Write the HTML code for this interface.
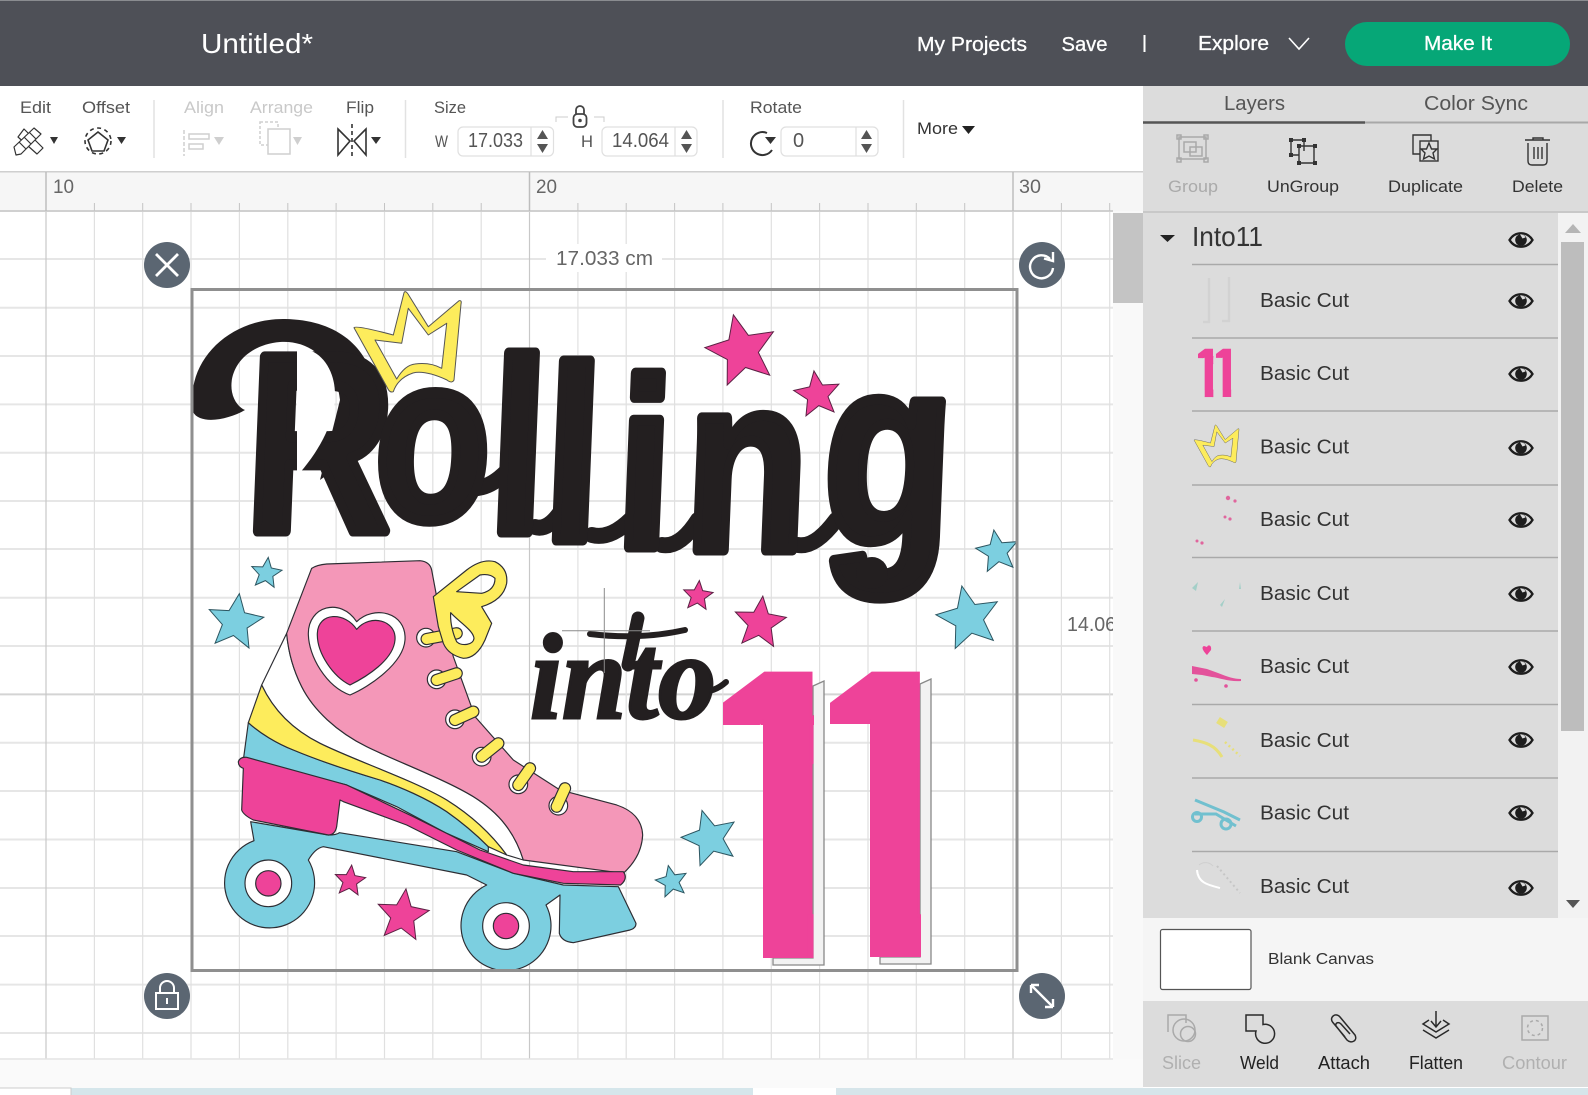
<!DOCTYPE html>
<html lang="en"><head><meta charset="utf-8"><title>Untitled*</title>
<style>
html,body{margin:0;padding:0;background:#fff;overflow:hidden;width:1588px;height:1095px}
svg{display:block}
text{font-family:"Liberation Sans","Noto Sans CJK JP",sans-serif}
.l{font-size:17px;fill:#555}
.d{font-size:17px;fill:#c9c9c9}
.t{font-size:20px;fill:#333}
.g{font-size:17px;fill:#aaa}
.k{font-size:17px;fill:#333}
.i{fill:none;stroke:#333;stroke-width:1.6}
.h{stroke:#fff;stroke-width:.3}
</style></head><body>
<svg xmlns="http://www.w3.org/2000/svg" width="1588" height="1095" viewBox="0 0 1588 1095">
<defs>
<polygon id="s" vector-effect="non-scaling-stroke" points="0,-1 .27,-.37 .95,-.31 .43,.14 .59,.81 0,.46 -.59,.81 -.43,.14 -.95,-.31 -.27,-.37"/>
<path id="crown" fill="#fdec5c" fill-rule="evenodd" stroke="#555" stroke-width="1" stroke-linejoin="round" d="M354 327.700Q356 325 393.300 335L404 292.700Q405 290 408 294L428.300 326.700L459 300.700Q462 300 461 304L454 380Q452 384 447 380Q425 370 413 373Q398 378 393.300 391.700Q390 393 388 389ZM375 340L396.700 379Q405 365 415 364Q430 362 441.700 368.300L446.700 323.300L428.300 335L408.300 308.300L401.700 343.300Z"/>
<g id="eye"><path d="M-11.500 0C-6 -9 6 -9 11.500 0C6 9 -6 9 -11.500 0Z" fill="none" stroke="#1e1e1e" stroke-width="2.300"/><circle r="5.800" fill="#1e1e1e"/><path d="M-1 -5.600A5.600 5.600 0 0 1 4.600 -2.600L1.500 -1.500Z" fill="#ddd"/></g>
<clipPath id="cv"><rect x="0" y="211" width="1113" height="848"/></clipPath>
<clipPath id="bx"><rect x="192" y="291" width="825" height="680"/></clipPath>
<clipPath id="one"><rect x="723" y="660" width="91" height="65"/><rect x="763" y="660" width="50.500" height="298"/><rect x="830" y="660" width="91" height="64"/><rect x="870" y="660" width="51" height="297"/></clipPath>
</defs>

<rect width="1588" height="1095" fill="#fff"/>

<!-- canvas grid -->
<g clip-path="url(#cv)">
<path fill="none" stroke="#e6e6e6" stroke-width="2" d="M0 259H1113M0 307.700H1113M0 356H1113M0 404.400H1113M0 452.700H1113M0 501H1113M0 549H1113M0 597.700H1113M0 646H1113M0 742.700H1113M0 791H1113M0 839.500H1113M0 888H1113M0 936H1113M0 984.600H1113M0 1033H1113"/>
<path stroke="#d4d4d4" stroke-width="2" d="M0 694.400H1113"/>
<path fill="none" stroke="#e0e0e0" stroke-width="1.200" d="M94.400 211V1059M142.700 211V1059M191 211V1059M239.400 211V1059M287.800 211V1059M336.100 211V1059M384.500 211V1059M432.800 211V1059M481.200 211V1059M577.900 211V1059M626.200 211V1059M674.600 211V1059M722.900 211V1059M771.300 211V1059M819.600 211V1059M868 211V1059M916.300 211V1059M964.700 211V1059M1061.400 211V1059M1109.700 211V1059"/>
<path fill="none" stroke="#c8c8c8" stroke-width="1.200" d="M46 211V1059M529.500 211V1059M1013 211V1059"/>
</g>
<rect x="0" y="1059" width="1143" height="29" fill="#fafafa"/>
<path d="M0 1059H1113" stroke="#e4e4e4" stroke-width="1.500"/>
<rect x="1113" y="211" width="30" height="848" fill="#f9f9f9"/>
<rect x="1113" y="213" width="30" height="90" fill="#c4c4c4"/>
<rect x="71" y="1088" width="682" height="7" fill="#d5e6eb"/>
<rect x="836" y="1088" width="752" height="7" fill="#d6e5ea"/>
<path d="M0 1088H71V1095" fill="none" stroke="#ccc"/>

<!-- artwork -->
<g clip-path="url(#bx)">
<!-- shadow of 11 -->
<path fill="#f2f2f2" stroke="#888" stroke-width="1.300" d="M813 686L824 681V965H773V958H813ZM920 684L931 679V964H880V957H920Z"/>
<!-- 11 -->
<g clip-path="url(#one)"><text transform="scale(.865 1)" x="784.400 908.500" y="958" font-size="414" font-weight="700" fill="#ee4399" stroke="#ee4399" stroke-width="3">11</text></g>

<!-- Rolling flourish and joins -->
<path fill="#231f20" d="M193 412C185 360 230 318 285 319C340 320 372 350 376 395C378 430 350 460 320 480L340 400C335 360 310 340 280 342C245 345 228 370 232 392C234 402 240 408 245 410C228 420 200 425 193 412Z"/>
<path fill="none" stroke="#231f20" stroke-width="16" stroke-linecap="round" d="M478 488Q492 486 506 472M535 527Q548 531 562 510M592 535Q612 540 635 515M662 545Q680 548 698 520M798 545Q815 548 836 520"/>
<!-- Rolling -->
<text transform="matrix(.8 0 -.04 1 21 0)" fill="#231f20" stroke="#231f20" stroke-width="11" stroke-linejoin="round" font-weight="700"><tspan x="305" y="531" font-size="253">R</tspan><tspan x="465.600" y="519" font-size="235">o</tspan><tspan x="609.700" y="532" font-size="247">l</tspan><tspan x="678.700" y="540" font-size="247">l</tspan><tspan x="769.700" y="547" font-size="240">i</tspan><tspan x="855" y="550" font-size="250">n</tspan><tspan x="1026.700" y="542" font-size="265">g</tspan></text>
<path fill="#fff" d="M297 349C316 346 335 365 335 395C335 425 316 455 297 476Z"/>
<circle cx="872" cy="573" r="16" fill="#231f20"/>
<!-- into -->
<path fill="none" stroke="#231f20" stroke-linecap="round" stroke-width="6" d="M590 634Q640 640 685 630M700 692Q715 692 726 682"/>
<path fill="none" stroke="#231f20" stroke-linecap="round" stroke-width="13" d="M638 618L628 665"/>
<text x="530" y="718" font-size="122" textLength="186" lengthAdjust="spacingAndGlyphs" fill="#231f20" stroke="#231f20" stroke-width="3" font-weight="700" font-style="italic" style="font-family:'Liberation Serif',serif">into</text>

<use href="#crown"/>

<!-- stars -->
<g fill="#ee4399" stroke="#5b2244" stroke-width="1">
<use href="#s" transform="translate(741.700 350.900) rotate(-13) scale(37)"/>
<use href="#s" transform="translate(817.300 394.700) rotate(-8) scale(24)"/>
<use href="#s" transform="translate(698 596) rotate(5) scale(15.500)"/>
<use href="#s" transform="translate(760 623) rotate(6) scale(27)"/>
<use href="#s" transform="translate(350 881) rotate(6) scale(16)"/>
<use href="#s" transform="translate(402.700 915.700) rotate(7) scale(27)"/>
</g>
<g fill="#7ccfe0" stroke="#2c5560" stroke-width="1">
<use href="#s" transform="translate(968.700 618.300) rotate(-12) scale(33)"/>
<use href="#s" transform="translate(997.300 551.700) rotate(-9) scale(22)"/>
<use href="#s" transform="translate(266.300 573.300) rotate(7) scale(16)"/>
<use href="#s" transform="translate(235.300 622.300) rotate(8) scale(29)"/>
<use href="#s" transform="translate(710 838.300) rotate(-16) scale(29)"/>
<use href="#s" transform="translate(671.700 881.700) rotate(-12) scale(16.500)"/>
</g>

<!-- skate -->
<g transform="translate(180 540) scale(.33333)" stroke="#2d2d33" stroke-width="3.500" stroke-linejoin="round">
<path fill="#7ccfe0" d="M212 845L445 885Q470 885 478 878L830 935L1000 1000L1150 1035L1315 1040L1368 1150Q1368 1165 1350 1170L1180 1208Q1145 1205 1138 1180L1140 1065L1098 1095A135 135 0 1 1 920 1035L860 1005L430 920Q405 925 385 960A135 135 0 1 1 222 902Z"/>
<circle cx="265" cy="1030" r="70" fill="#fff"/><circle cx="265" cy="1030" r="38" fill="#ee4399"/>
<circle cx="978" cy="1158" r="70" fill="#fff"/><circle cx="978" cy="1158" r="38" fill="#ee4399"/>
<path fill="#7ccfe0" d="M205 548C240 580 290 610 340 630C400 655 500 690 600 720C660 740 740 775 800 815C850 850 890 885 925 920L925 935L800 880L650 800L500 735L300 685L190 660Z"/>
<path fill="#fff" d="M320 280L245 435C280 510 340 570 420 610C520 660 700 720 800 780C880 830 940 890 980 945L1030 960C1005 880 960 820 880 770C800 720 640 660 560 620C470 575 400 510 365 440C340 390 325 340 320 280Z"/>
<path fill="#fdec5c" d="M245 435C280 510 340 570 420 610C520 660 700 720 800 780C880 830 940 890 980 945L925 920C890 885 850 850 800 815C740 775 660 740 600 720C500 690 400 655 340 630C290 610 240 580 205 548Z"/>
<path fill="#f497b8" d="M395 85Q410 75 440 72L720 62Q750 65 755 90L770 170L820 350L885 530L1000 660L1140 750L1310 795Q1385 820 1388 885Q1385 950 1330 1000L1030 960C1005 880 960 820 880 770C800 720 640 660 560 620C470 575 400 510 365 440C340 390 325 340 320 280Z"/>
<path fill="#ee4399" d="M175 665Q180 650 200 652L500 735L700 830L900 930L1030 975L1180 995L1330 995Q1345 1015 1322 1035L1150 1030L1000 1000L830 930L680 855L490 785L480 780L470 860Q465 885 445 885L220 840Q190 825 185 810L190 685Q175 680 175 665Z"/>
<path fill="#fff" d="M530 245C580 195 680 215 675 300C670 370 570 440 510 465C440 440 385 350 385 280C385 200 480 170 530 245Z"/>
<path fill="#ee4399" d="M530 268C570 220 650 240 645 300C640 360 560 410 510 435C460 410 410 340 412 280C415 215 495 215 530 268Z"/>
<g fill="#fff">
<circle cx="738" cy="293" r="28"/><circle cx="770" cy="418" r="28"/><circle cx="825" cy="538" r="28"/><circle cx="905" cy="650" r="28"/><circle cx="1015" cy="733" r="28"/><circle cx="1135" cy="797" r="28"/>
</g>
<g fill="none" stroke-linecap="round">
<path stroke="#2d2d33" stroke-width="37" d="M770 420L830 400M825 540L880 515M905 650L955 610M1015 735L1050 685M1130 800L1155 745M740 297L830 280"/>
<path stroke="#fdec5c" stroke-width="30" d="M770 420L830 400M825 540L880 515M905 650L955 610M1015 735L1050 685M1130 800L1155 745M740 297L830 280"/>
</g>
<path fill="#fdec5c" fill-rule="evenodd" d="M760 170L860 90Q905 55 945 65Q985 85 980 130Q970 180 905 200L935 250L915 300Q890 355 850 355Q805 345 790 310L775 260ZM830 155L905 160Q945 150 945 115Q930 100 900 105ZM812 218C830 240 880 270 882 295C880 315 845 320 830 305C820 285 810 250 812 218Z"/>
</g>
</g>
<rect x="192" y="289.500" width="825" height="681" fill="none" stroke="#8f8f8f" stroke-width="3"/>

<!-- crosshair -->
<path d="M604.300 588V673M562 630.700H650" stroke="#8a8a8a" stroke-width="1" fill="none"/>

<!-- selection labels -->
<rect x="546" y="244" width="116" height="28" fill="#fff"/>
<text x="556" y="265" font-size="20" textLength="97" lengthAdjust="spacingAndGlyphs" fill="#666">17.033 cm</text>
<text x="1067" y="631" font-size="20" fill="#666" textLength="60" lengthAdjust="spacingAndGlyphs" clip-path="url(#cv)">14.064</text>

<!-- corner buttons -->
<circle cx="167" cy="265" r="23" fill="#5b6672"/><path d="M156 254L178 276M178 254L156 276" stroke="#fff" stroke-width="2.800" fill="none"/>
<circle cx="1042" cy="265" r="23" fill="#5b6672"/><path d="M1050 259A11.500 11.500 0 1 0 1053 268" fill="none" stroke="#fff" stroke-width="2.400"/><path d="M1044 258.500L1053 261L1053 252" fill="none" stroke="#fff" stroke-width="2.400"/>
<circle cx="167" cy="996" r="23" fill="#5b6672"/><rect x="156" y="993" width="22" height="16" fill="none" stroke="#fff" stroke-width="2"/><path d="M160 993V988A7 7 0 0 1 174 988V993M167 998V1004" fill="none" stroke="#fff" stroke-width="2"/>
<circle cx="1042" cy="996" r="23" fill="#5b6672"/><path d="M1031 985L1053 1007M1031 985H1039M1031 985V993M1053 1007H1045M1053 1007V999" fill="none" stroke="#fff" stroke-width="2.400"/>

<!-- ruler -->
<rect x="0" y="171" width="1143" height="40" fill="#f6f6f6"/>
<path d="M0 171.500H1143" stroke="#cfcfcf" stroke-width="2"/>
<path d="M0 211H1113" stroke="#d0d0d0" stroke-width="2"/>
<path d="M46 172V211M529.500 172V211M1013 172V211" stroke="#bdbdbd" stroke-width="1.500"/>
<path d="M94.400 203V211M142.700 203V211M191 203V211M239.400 203V211M287.800 203V211M336.100 203V211M384.500 203V211M432.800 203V211M481.200 203V211M577.900 203V211M626.200 203V211M674.600 203V211M722.900 203V211M771.300 203V211M819.600 203V211M868 203V211M916.300 203V211M964.700 203V211M1061.400 203V211M1109.700 203V211" stroke="#c4c4c4"/>
<text x="53" y="193" font-size="19" fill="#666" textLength="21" lengthAdjust="spacingAndGlyphs">10</text>
<text x="536" y="193" font-size="19" fill="#666" textLength="21" lengthAdjust="spacingAndGlyphs">20</text>
<text x="1019" y="193" font-size="19" fill="#666" textLength="22" lengthAdjust="spacingAndGlyphs">30</text>

<!-- toolbar -->
<rect x="0" y="86" width="1143" height="85" fill="#fff"/>
<text class="l" x="20" y="113" textLength="31" lengthAdjust="spacingAndGlyphs">Edit</text>
<text class="l" x="82" y="113" textLength="48" lengthAdjust="spacingAndGlyphs">Offset</text>
<text class="d" x="184" y="113" textLength="40" lengthAdjust="spacingAndGlyphs">Align</text>
<text class="d" x="250" y="113" textLength="63" lengthAdjust="spacingAndGlyphs">Arrange</text>
<text class="l" x="346" y="113" textLength="28" lengthAdjust="spacingAndGlyphs">Flip</text>
<text class="l" x="434" y="113" textLength="32" lengthAdjust="spacingAndGlyphs">Size</text>
<text class="l" x="750" y="113" textLength="52" lengthAdjust="spacingAndGlyphs">Rotate</text>
<text class="l" x="435" y="147" textLength="13" lengthAdjust="spacingAndGlyphs">W</text>
<text class="l" x="581" y="147" textLength="12" lengthAdjust="spacingAndGlyphs">H</text>
<text x="917" y="134" font-size="17" fill="#333" textLength="41" lengthAdjust="spacingAndGlyphs">More</text>
<path d="M962 126H975L968.500 134Z" fill="#222"/>
<path d="M154 100V158M405.500 100V158M723 100V158M903.500 100V158" stroke="#e2e2e2" stroke-width="1.500"/>

<!-- inputs -->
<g fill="#fff" stroke="#e0e0e0" stroke-width="1.200">
<rect x="458" y="127" width="95.500" height="29" rx="5"/><path d="M531 127V156"/>
<rect x="602" y="127" width="95" height="29" rx="5"/><path d="M675 127V156"/>
<rect x="781" y="127" width="97" height="29" rx="5"/><path d="M856 127V156"/>
</g>
<text x="468" y="147" font-size="20" fill="#555" textLength="55" lengthAdjust="spacingAndGlyphs">17.033</text>
<text x="612" y="147" font-size="20" fill="#555" textLength="57" lengthAdjust="spacingAndGlyphs">14.064</text>
<text x="793" y="147" font-size="20" fill="#555">0</text>
<path d="M537 139L542.500 130L548 139ZM537 144L542.500 153L548 144ZM681 139L686.500 130L692 139ZM681 144L686.500 153L692 144ZM861 139L866.500 130L872 139ZM861 144L866.500 153L872 144Z" fill="#555"/>

<!-- lock -->
<path d="M556 122V117H568M594 117H604V122" fill="none" stroke="#ccc"/>
<rect x="573.500" y="114" width="13" height="13" rx="4" fill="none" stroke="#444" stroke-width="1.800"/><path d="M576 114V110A4 4 0 0 1 584 110V114" fill="none" stroke="#444" stroke-width="1.800"/><circle cx="580" cy="120.500" r="1.800" fill="#444"/>

<!-- toolbar icons -->
<g fill="#fff" stroke="#333" stroke-width="1.200" stroke-linejoin="round">
<path d="M18 137L24 129L43 148L37 154Z"/>
<path d="M16 155L14 147L34 128L41 134L21 154ZM19 142L26 149M24 137L31 144M29 132L36 139"/>
</g>
<g class="i">
<path d="M98 132L108 140L104 151H92L88 140Z"/>
<circle cx="98" cy="141" r="13" stroke-dasharray="4 3.500"/>
<path d="M338 129L350 141L338 155Z"/><path d="M366 129L354 141L366 155Z"/>
<path d="M352 124V158" stroke-dasharray="4 3"/>
<path d="M767 133A11.500 11.500 0 1 0 772 150" stroke-width="2"/>
</g>
<path d="M765 137H776L770.500 144Z" fill="#333"/>
<path d="M50 137H58L54 144ZM117 137H126L121.500 144ZM371 137H381L376 144Z" fill="#333"/>
<g fill="none" stroke="#cfcfcf" stroke-width="1.500">
<path d="M184 130V156" stroke-dasharray="4 2"/>
<rect x="189" y="134" width="20" height="5"/><rect x="189" y="144" width="14" height="5"/>
<rect x="260" y="122" width="18" height="23" stroke-dasharray="3 2"/>
<rect x="268" y="129" width="22" height="25" fill="#fff"/>
</g>
<path d="M214 137H224L219 145ZM293 137H302L297.500 145Z" fill="#cfcfcf"/>

<!-- header -->
<rect x="0" y="0" width="1588" height="86" fill="#4e5057"/>
<rect x="0" y="0" width="1588" height="1" fill="#8a8c90"/>
<text x="201" y="53" font-size="28" fill="#fff" textLength="112" lengthAdjust="spacingAndGlyphs">Untitled*</text>
<text class="h" x="917" y="51" font-size="20" fill="#fff" textLength="110" lengthAdjust="spacingAndGlyphs">My Projects</text>
<text class="h" x="1061.500" y="51" font-size="20" fill="#fff" textLength="46" lengthAdjust="spacingAndGlyphs">Save</text>
<path d="M1144.500 35V52" stroke="#fff" stroke-width="2"/>
<text class="h" x="1198" y="50" font-size="20" fill="#fff" textLength="71" lengthAdjust="spacingAndGlyphs">Explore</text>
<path d="M1289 38L1299 49L1309 38" fill="none" stroke="#fff" stroke-width="1.600"/>
<rect x="1345" y="22" width="225" height="44" rx="22" fill="#06a777"/>
<text class="h" x="1424" y="50" font-size="20" fill="#fff" textLength="68" lengthAdjust="spacingAndGlyphs">Make It</text>

<!-- right panel -->
<rect x="1143" y="86" width="445" height="1001" fill="#dcdcdc"/>
<rect x="1143" y="918" width="445" height="83" fill="#f5f5f5"/>
<rect x="1558" y="213" width="30" height="705" fill="#f2f2f2"/>
<rect x="1561" y="242" width="23" height="489" fill="#bdbdbd"/>
<path d="M1565 233L1573 224L1581 233Z" fill="#b5b5b5"/><path d="M1566 900H1580L1573 908Z" fill="#555"/>
<path d="M1143 122.500H1588" stroke="#a8a8a8" stroke-width="2"/><path d="M1143 122.500H1365" stroke="#555" stroke-width="2.400"/>
<path d="M1143 212H1588" stroke="#c8c8c8" stroke-width="2"/>
<text x="1224" y="110" font-size="20" fill="#555" textLength="61" lengthAdjust="spacingAndGlyphs">Layers</text>
<text x="1424" y="110" font-size="20" fill="#555" textLength="104" lengthAdjust="spacingAndGlyphs">Color Sync</text>
<text class="g" x="1168" y="192" textLength="50" lengthAdjust="spacingAndGlyphs">Group</text>
<text class="k" x="1267" y="192" textLength="72" lengthAdjust="spacingAndGlyphs">UnGroup</text>
<text class="k" x="1388" y="192" textLength="75" lengthAdjust="spacingAndGlyphs">Duplicate</text>
<text class="k" x="1512" y="192" textLength="51" lengthAdjust="spacingAndGlyphs">Delete</text>

<!-- panel icons -->
<g fill="none" stroke="#a9a9a9" stroke-width="1.500">
<rect x="1179" y="137" width="27" height="22"/><rect x="1184" y="142" width="12" height="10"/><rect x="1190" y="147" width="12" height="9"/>
<rect x="1177" y="135" width="4" height="4"/><rect x="1204" y="135" width="4" height="4"/><rect x="1177" y="158" width="4" height="4"/><rect x="1204" y="158" width="4" height="4"/>
</g>
<g fill="none" stroke="#333" stroke-width="1.400">
<path d="M1291 140H1304V151M1291 140V155H1299M1299 146H1314V163H1299ZM1299 146V163"/>
</g>
<g fill="#333"><rect x="1289" y="138" width="4" height="4"/><rect x="1302" y="138" width="4" height="4"/><rect x="1289" y="153" width="4" height="4"/><rect x="1297" y="144" width="4" height="4"/><rect x="1313" y="144" width="4" height="4"/><rect x="1297" y="161" width="4" height="4"/><rect x="1313" y="161" width="4" height="4"/></g>
<g fill="none" stroke="#333" stroke-width="1.400">
<path d="M1420 154H1413V135H1431V141"/><rect x="1420" y="141" width="18" height="20" /><path d="M1429 143L1431.500 149H1437L1433 153L1434.500 159L1429 156L1423.500 159L1425 153L1421 149H1426.500Z"/>
<path d="M1525 140H1550M1533 140V138H1543V140M1528 143V161Q1528 165 1532 165H1543Q1547 165 1547 161V143M1534 147V159M1538 147V159M1542 147V159"/>
</g>

<!-- layers -->
<path d="M1160 235H1175L1167.500 242Z" fill="#222"/>
<text x="1192" y="246" font-size="28" fill="#333" textLength="71" lengthAdjust="spacingAndGlyphs">Into11</text>
<path d="M1192 264.500H1558M1192 338H1558M1192 411H1558M1192 485H1558M1192 557.500H1558M1192 631H1558M1192 704.500H1558M1192 778H1558M1192 851.500H1558" stroke="#a9a9a9" stroke-width="1.400"/>
<g class="t" style="font-size:20.500px">
<text x="1260" y="307" textLength="89" lengthAdjust="spacingAndGlyphs">Basic Cut</text>
<text x="1260" y="380" textLength="89" lengthAdjust="spacingAndGlyphs">Basic Cut</text>
<text x="1260" y="453.500" textLength="89" lengthAdjust="spacingAndGlyphs">Basic Cut</text>
<text x="1260" y="526" textLength="89" lengthAdjust="spacingAndGlyphs">Basic Cut</text>
<text x="1260" y="600" textLength="89" lengthAdjust="spacingAndGlyphs">Basic Cut</text>
<text x="1260" y="673" textLength="89" lengthAdjust="spacingAndGlyphs">Basic Cut</text>
<text x="1260" y="747" textLength="89" lengthAdjust="spacingAndGlyphs">Basic Cut</text>
<text x="1260" y="819.500" textLength="89" lengthAdjust="spacingAndGlyphs">Basic Cut</text>
<text x="1260" y="893" textLength="89" lengthAdjust="spacingAndGlyphs">Basic Cut</text>
</g>
<use href="#eye" transform="translate(1521 240)"/><use href="#eye" transform="translate(1521 301)"/><use href="#eye" transform="translate(1521 374)"/><use href="#eye" transform="translate(1521 448)"/><use href="#eye" transform="translate(1521 520)"/><use href="#eye" transform="translate(1521 594)"/><use href="#eye" transform="translate(1521 667)"/><use href="#eye" transform="translate(1521 740)"/><use href="#eye" transform="translate(1521 813)"/><use href="#eye" transform="translate(1521 888)"/>

<!-- thumbnails -->
<path d="M1209 278V322H1203M1229 277V321H1222" fill="none" stroke="#d2d2d2" stroke-width="2.500"/>
<g transform="translate(1198 349) scale(.168) translate(-723 -671)"><g clip-path="url(#one)"><text transform="scale(.865 1)" x="784.400 908.500" y="958" font-size="414" font-weight="700" fill="#ee4399" stroke="#ee4399" stroke-width="3">11</text></g></g>
<use href="#crown" transform="translate(1194 425) scale(.42) translate(-354 -292)"/>
<g fill="#e0669d"><circle cx="1228" cy="498" r="2.200"/><circle cx="1235" cy="501" r="1.600"/><circle cx="1225" cy="517" r="1.500"/><circle cx="1230" cy="519" r="1.600"/><circle cx="1197" cy="541" r="1.500"/><circle cx="1202" cy="543" r="1.600"/></g>
<g fill="#a4cfc8"><path d="M1192 588L1198 582L1196 591ZM1240 582L1241 589L1239 589ZM1220 605L1225 599L1222 607Z"/></g>
<path d="M1207 647C1208 644 1212 645 1211 650L1207 655C1203 651 1201 647 1204 646Z" fill="#ee4399"/>
<path d="M1192 666L1207 669L1218 673C1228 677 1234 679 1241 679V681C1230 682 1220 678 1212 677L1202 675L1192 674Z" fill="#e3529b"/>
<circle cx="1196" cy="680" r="1.800" fill="#e3529b"/><circle cx="1226" cy="686" r="1.800" fill="#e3529b"/>
<g fill="none" stroke="#e7df7a"><path d="M1193 740C1205 742 1215 745 1222 757" stroke-width="3"/><path d="M1218 720L1226 725" stroke-width="7"/><path d="M1225 742L1240 756" stroke-width="2.500" stroke-dasharray="2 3"/></g>
<g fill="none" stroke="#71c0cf"><path d="M1195 800L1224 812L1240 820M1195 814H1216L1236 826" stroke-width="3"/><circle cx="1197" cy="817" r="4.500" stroke-width="3"/><circle cx="1226" cy="824" r="5" stroke-width="3"/></g>
<path d="M1197 870C1198 883 1208 885 1220 888" fill="none" stroke="#fff" stroke-width="2"/>
<path d="M1217 866L1240 893" fill="none" stroke="#c6c6c6" stroke-width="2" stroke-dasharray="2 3"/>
<path d="M1199 865A10 10 0 0 1 1213 866" fill="none" stroke="#cfcfcf"/>

<!-- blank canvas -->
<rect x="1160.500" y="929.500" width="90.500" height="60" rx="2" fill="#fff" stroke="#555" stroke-width="1.200"/>
<text x="1268" y="964" font-size="16" fill="#333" textLength="106" lengthAdjust="spacingAndGlyphs">Blank Canvas</text>

<!-- bottom tools -->
<text x="1162" y="1069" font-size="18" fill="#b0b0b0" textLength="39" lengthAdjust="spacingAndGlyphs">Slice</text>
<text x="1240" y="1069" font-size="18" fill="#222" textLength="39" lengthAdjust="spacingAndGlyphs">Weld</text>
<text x="1318" y="1069" font-size="18" fill="#222" textLength="52" lengthAdjust="spacingAndGlyphs">Attach</text>
<text x="1409" y="1069" font-size="18" fill="#222" textLength="54" lengthAdjust="spacingAndGlyphs">Flatten</text>
<text x="1502" y="1069" font-size="18" fill="#b0b0b0" textLength="65" lengthAdjust="spacingAndGlyphs">Contour</text>
<g fill="none" stroke="#aaa" stroke-width="1.500">
<path d="M1168 1032V1015H1186V1023"/><circle cx="1184" cy="1030" r="11"/><circle cx="1188" cy="1034" r="7.500"/>
<rect x="1522" y="1016" width="26" height="24"/><circle cx="1535" cy="1028" r="7.500" stroke-dasharray="3 3"/>
</g>
<g fill="none" stroke="#2a2a2a" stroke-width="1.500">
<path d="M1246 1015H1263V1024.500A9.500 9.500 0 1 1 1256 1031H1246Z"/>
<path d="M1345 1037L1332.500 1022C1329 1017 1336 1012 1340 1017L1355 1035C1358 1041 1351 1044 1347 1040L1336 1026C1335 1022 1339 1022 1341 1024L1350 1034"/>
<path d="M1436 1011V1026M1431 1021L1436 1027L1441 1021M1429 1020L1423 1024L1436 1032L1449 1024L1443 1020M1423 1030L1436 1038L1449 1030"/>
</g>
</svg>
</body></html>
